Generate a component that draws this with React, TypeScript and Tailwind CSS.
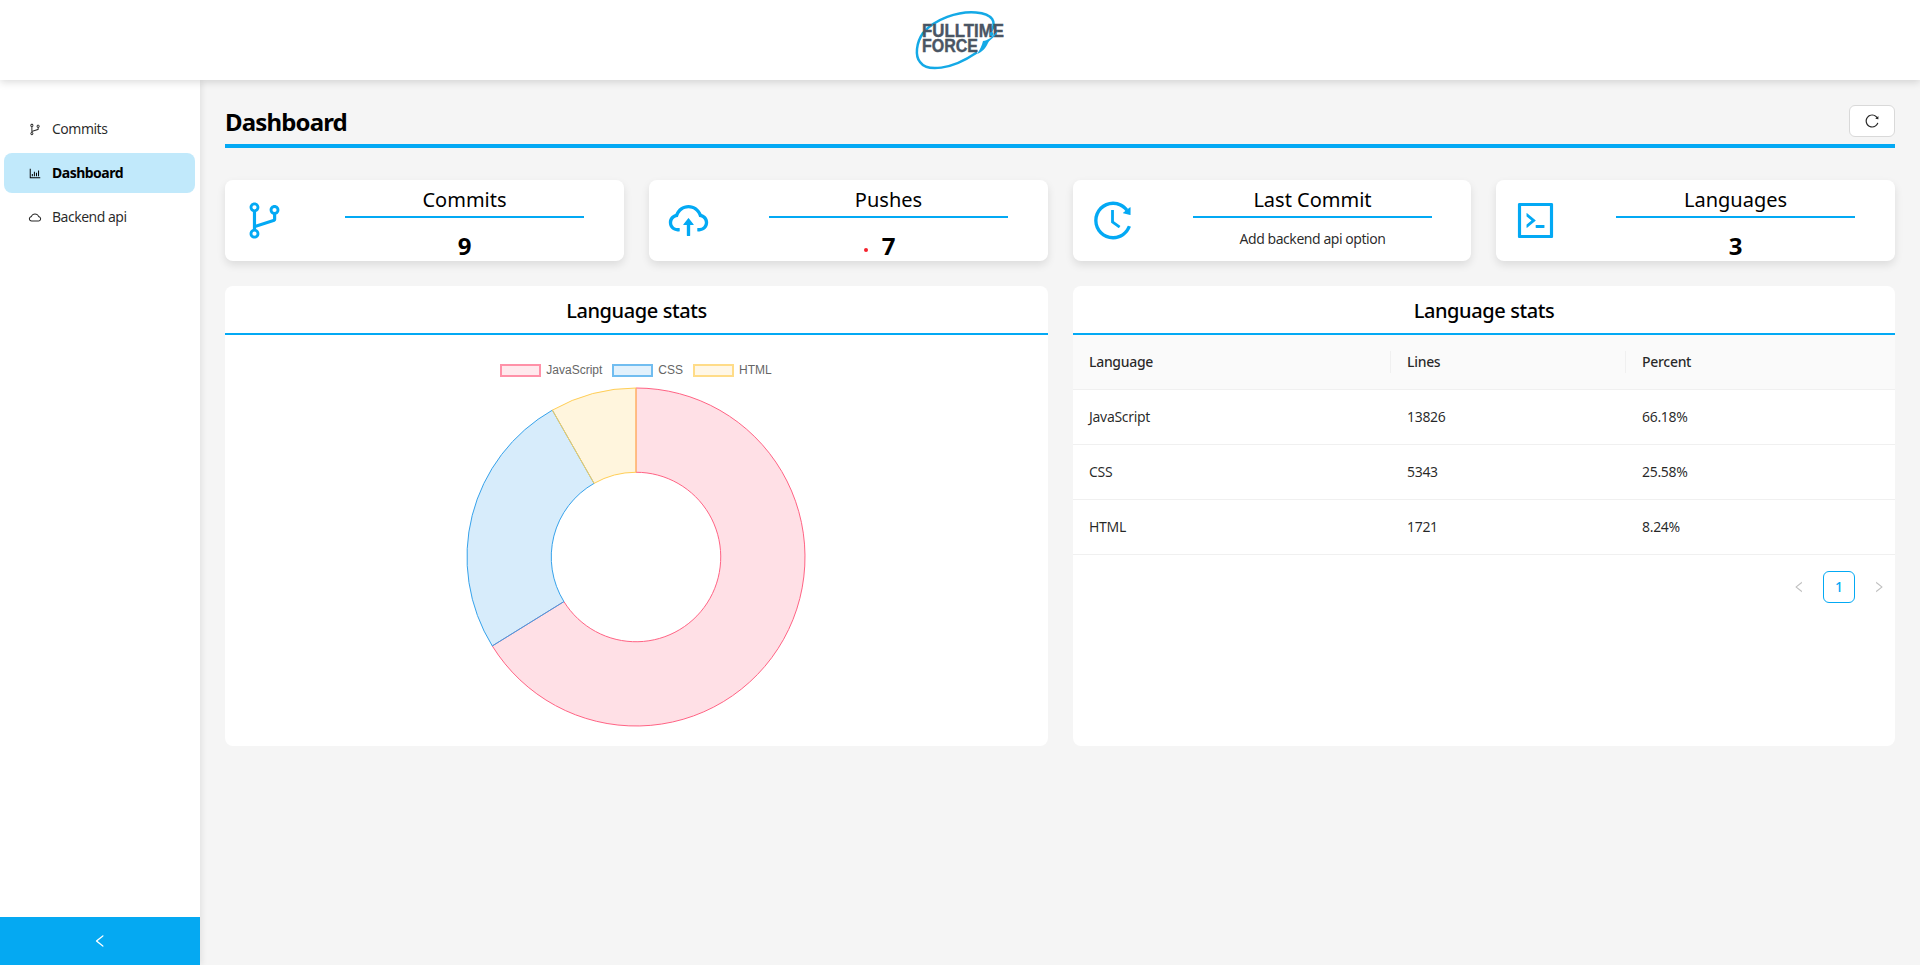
import type { ReactNode } from "react";
import {
  AiOutlineBarChart,
  AiOutlineBranches,
  AiOutlineCloud,
  AiOutlineCloudUpload,
  AiOutlineCode,
  AiOutlineHistory,
  AiOutlineLeft,
  AiOutlineReload,
  AiOutlineRight,
} from "react-icons/ai";

const languages = [
  { name: "JavaScript", lines: 13826, percent: 66.18, fill: "rgba(255,99,132,0.2)", stroke: "rgb(255,99,132)" },
  { name: "CSS", lines: 5343, percent: 25.58, fill: "rgba(54,162,235,0.2)", stroke: "rgb(54,162,235)" },
  { name: "HTML", lines: 1721, percent: 8.24, fill: "rgba(255,206,86,0.2)", stroke: "rgb(255,206,86)" },
];

function Logo() {
  return (
    <svg width="100" height="64" viewBox="0 0 100 64" className="block">
      {/* swoosh around the wordmark */}
      <path
        d="M81 22 C87 12 83 4 66 2.5 C48 1 25 9 13 23 C6 33 5 46 10 52 C17 62 41 60 66 43"
        fill="none"
        stroke="#14a9e6"
        strokeWidth="2.5"
        strokeLinecap="round"
      />
      <text x="12" y="27" fontFamily="'Liberation Sans', sans-serif" fontWeight="700" fontSize="17.5" fill="#4a5563" stroke="#4a5563" strokeWidth="0.4" textLength="82" lengthAdjust="spacingAndGlyphs">
        FULLTIME
      </text>
      <text x="12" y="42" fontFamily="'Liberation Sans', sans-serif" fontWeight="700" fontSize="17.5" fill="#4a5563" stroke="#4a5563" strokeWidth="0.4" textLength="56" lengthAdjust="spacingAndGlyphs">
        FORCE
      </text>
      {/* little figure reaching up */}
      <circle cx="81.5" cy="24" r="2" fill="#14a9e6" />
      <path d="M88 20 C86 27 80 29 78 33 C76 38 72 42 67 44 C70 40 72 35 73 31 C77 31 83 27 88 20 Z" fill="#14a9e6" />
    </svg>
  );
}

function NavItem({ icon, label, active }: { icon: ReactNode; label: string; active?: boolean }) {
  return (
    <div
      className={
        active
          ? "mx-1 flex h-10 w-[191px] items-center gap-[10px] rounded-lg bg-[#c1e9fb] pl-6 text-sm font-bold text-black"
          : "mx-1 flex h-10 w-[191px] items-center gap-[10px] rounded-lg pl-6 text-sm text-[#000000d9]"
      }
    >
      <span className="flex w-[14px] justify-center text-[15px]">{icon}</span>
      <span className="tracking-[-0.5px]">{label}</span>
    </div>
  );
}

function StatCard({ icon, title, children }: { icon: ReactNode; title: string; children: ReactNode }) {
  return (
    <div className="flex h-[81px] rounded-lg bg-white shadow-[0_4px_8px_rgba(0,0,0,0.1)]">
      <div className="flex w-[120px] items-center pl-[17px] text-[45px] text-[#03a9f4]">{icon}</div>
      <div className="w-[239px]">
        <div className="flex h-[38px] items-center justify-center border-b-2 border-[#03a9f4] pt-[4px] text-xl text-black">
          {title}
        </div>
        <div className="flex h-[43px] items-center justify-center">{children}</div>
      </div>
    </div>
  );
}

function Donut() {
  const r = 169;
  const inner = 84.75;
  const c = 171;
  let start = 0;
  const point = (radius: number, turn: number) => {
    const a = turn * 2 * Math.PI;
    return `${(c + radius * Math.sin(a)).toFixed(2)} ${(c - radius * Math.cos(a)).toFixed(2)}`;
  };
  return (
    <svg width="342" height="342" viewBox="0 0 342 342" className="block">
      {languages.map((l) => {
        const from = start;
        const to = start + l.percent / 100;
        start = to;
        const large = to - from > 0.5 ? 1 : 0;
        const d = `M${point(r, from)} A${r} ${r} 0 ${large} 1 ${point(r, to)} L${point(inner, to)} A${inner} ${inner} 0 ${large} 0 ${point(inner, from)} Z`;
        return <path key={l.name} d={d} fill={l.fill} stroke={l.stroke} strokeWidth="1" />;
      })}
    </svg>
  );
}

function LegendItem({ name, fill, stroke }: { name: string; fill: string; stroke: string }) {
  return (
    <div className="flex items-center gap-[5px]">
      <span className="h-[13px] w-[41px] border-2 opacity-70" style={{ backgroundColor: fill, borderColor: stroke }} />
      <span className="font-['Liberation_Sans',sans-serif] text-xs leading-[13px] text-[#666666]">{name}</span>
    </div>
  );
}

function PanelTitle({ children }: { children: ReactNode }) {
  return (
    <div className="flex h-[49px] items-center justify-center border-b-2 border-[#03a9f4] pt-[2px] text-xl font-medium tracking-[-0.4px] text-black">
      {children}
    </div>
  );
}

export default function App() {
  return (
    <div className="flex h-[965px] w-[1920px] flex-col overflow-hidden bg-[#f5f5f5] font-['Noto_Sans','Open_Sans',sans-serif]">
      <header className="relative z-20 flex h-20 shrink-0 items-center justify-center bg-white shadow-[0_2px_8px_rgba(0,0,0,0.15)]">
        <div className="mt-1">
          <Logo />
        </div>
      </header>

      <div className="flex min-h-0 flex-1">
        <aside className="relative z-10 flex w-[200px] shrink-0 flex-col bg-white shadow-[2px_0_6px_rgba(0,0,0,0.08)]">
          <nav className="flex flex-1 flex-col gap-1 pt-[29px]">
            <NavItem icon={<AiOutlineBranches />} label="Commits" />
            <NavItem icon={<AiOutlineBarChart />} label="Dashboard" active />
            <NavItem icon={<AiOutlineCloud />} label="Backend api" />
          </nav>
          <div className="flex h-12 items-center justify-center bg-[#05a9f2] text-base text-white">
            <AiOutlineLeft />
          </div>
        </aside>

        <main className="min-w-0 flex-1 pl-[25px] pr-[25px] pt-[25px]">
          <div className="flex h-[43px] items-start justify-between border-b-4 border-[#03a9f4]">
            <h1 className="text-2xl font-bold leading-[34px] tracking-[-0.85px] text-black">Dashboard</h1>
            <button className="flex h-8 w-[46px] items-center justify-center rounded-md border border-[#d9d9d9] bg-white text-base text-[#000000d9]">
              <AiOutlineReload />
            </button>
          </div>

          <div className="mt-8 grid grid-cols-[399px_399px_398px_399px] gap-x-[25px]">
            <StatCard icon={<AiOutlineBranches />} title="Commits">
              <span className="mt-3 text-2xl font-bold leading-none text-black">9</span>
            </StatCard>
            <StatCard icon={<AiOutlineCloudUpload />} title="Pushes">
              <span className="relative mt-3 text-2xl font-bold leading-none text-black">
                7
                <span className="absolute left-[-18px] top-[14px] h-[4px] w-[4px] rounded-full bg-[#f5222d]" />
              </span>
            </StatCard>
            <StatCard icon={<AiOutlineHistory />} title="Last Commit">
              <span className="mb-[2px] text-sm tracking-[-0.45px] text-[#000000d9]">Add backend api option</span>
            </StatCard>
            <StatCard icon={<AiOutlineCode />} title="Languages">
              <span className="mt-3 text-2xl font-bold leading-none text-black">3</span>
            </StatCard>
          </div>

          <div className="mt-[25px] grid grid-cols-[823px_822px] gap-x-[25px]">
            <section className="h-[460px] rounded-lg bg-white">
              <PanelTitle>Language stats</PanelTitle>
              <div className="flex justify-center gap-[10px] pr-[1px] pt-[29px]">
                {languages.map((l) => (
                  <LegendItem key={l.name} name={l.name} fill={l.fill} stroke={l.stroke} />
                ))}
              </div>
              <div className="mt-[9px] flex justify-center pr-[1px]">
                <Donut />
              </div>
            </section>

            <section className="h-[460px] rounded-lg bg-white">
              <PanelTitle>Language stats</PanelTitle>
              <div className="grid h-[55px] grid-cols-[318px_235px_1fr] items-center border-b border-[#f0f0f0] bg-[#fafafa] text-sm font-medium tracking-[-0.3px] text-[#000000d9]">
                <div className="flex h-[22px] items-center border-r border-[#f0f0f0] pl-4">Language</div>
                <div className="flex h-[22px] items-center border-r border-[#f0f0f0] pl-4">Lines</div>
                <div className="pl-4">Percent</div>
              </div>
              {languages.map((l) => (
                <div
                  key={l.name}
                  className="grid h-[55px] grid-cols-[318px_235px_1fr] items-center border-b border-[#f0f0f0] text-sm tracking-[-0.3px] text-[#000000d9]"
                >
                  <div className="pl-4">{l.name}</div>
                  <div className="pl-4">{l.lines}</div>
                  <div className="pl-4">{l.percent}%</div>
                </div>
              ))}
              <div className="mt-4 flex justify-end gap-2">
                <span className="flex h-8 w-8 items-center justify-center text-sm text-[#00000040]">
                  <AiOutlineLeft />
                </span>
                <span className="flex h-8 w-8 items-center justify-center rounded-md border border-[#03a9f4] text-sm font-medium text-[#03a9f4]">
                  1
                </span>
                <span className="flex h-8 w-8 items-center justify-center text-sm text-[#00000040]">
                  <AiOutlineRight />
                </span>
              </div>
            </section>
          </div>
        </main>
      </div>
    </div>
  );
}
